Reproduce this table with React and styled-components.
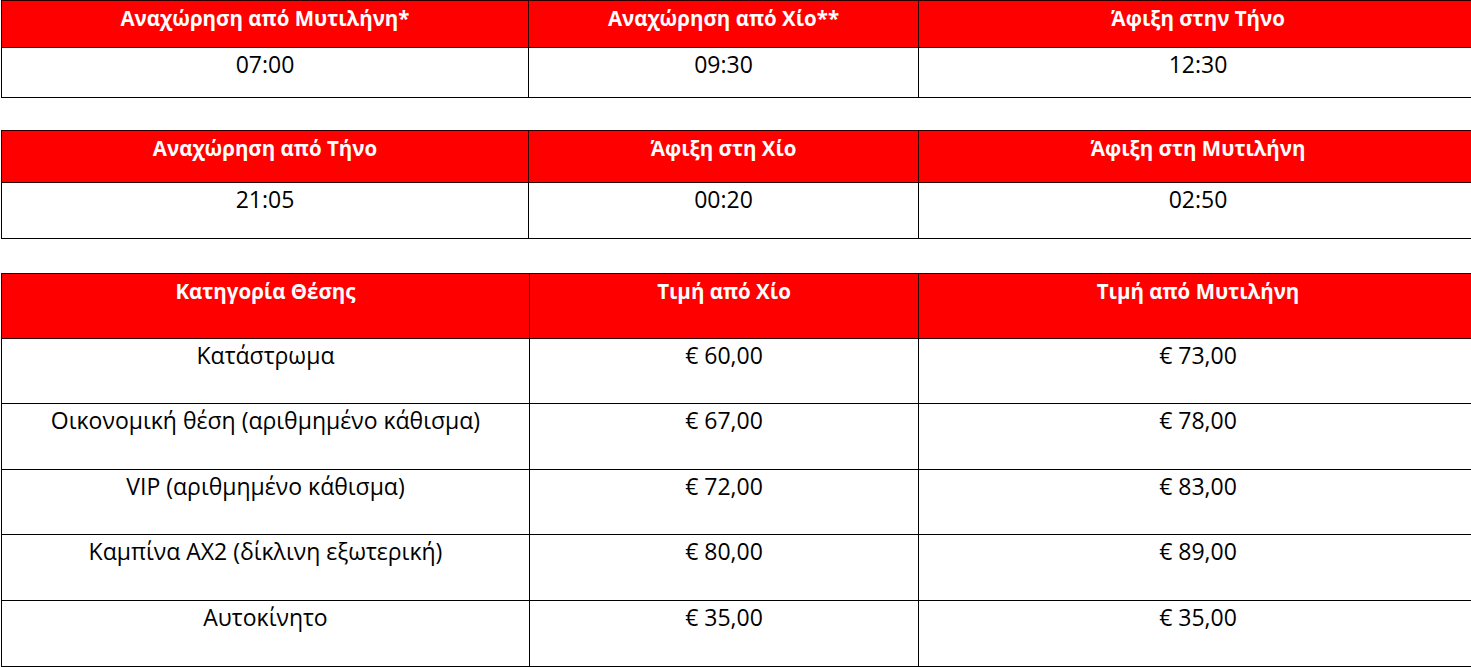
import React from 'react';
import styled, { createGlobalStyle } from 'styled-components';

const GlobalStyle = createGlobalStyle`
  html, body {
    margin: 0;
    padding: 0;
    background: #ffffff;
    overflow: hidden;
  }
  body {
    font-family: 'Open Sans', 'Noto Sans', 'Liberation Sans', sans-serif;
  }
`;

const Page = styled.div`
  display: flex;
  flex-direction: column;
  padding-left: 1px;
  width: 1476px;
`;

const Schedule = styled.table`
  border-collapse: collapse;
  table-layout: fixed;
  width: 1476px;
  margin-top: ${({ gap }) => gap}px;
`;

const HeadRow = styled.tr`
  height: ${({ height }) => height}px;
  background: #ff0000;
`;

const BodyRow = styled.tr`
  height: ${({ height }) => height}px;
`;

const HeadCell = styled.th`
  border: 1px solid #2a0000;
  color: #ffffff;
  font-size: 20.5px;
  font-weight: 700;
  line-height: 30px;
  padding: 2px 6px 0;
  text-align: center;
  vertical-align: top;
  white-space: nowrap;
`;

const Cell = styled.td`
  border: 1px solid #000000;
  color: #000000;
  font-size: 23px;
  font-weight: 400;
  line-height: 30px;
  padding: 1px 6px 0;
  text-align: center;
  vertical-align: top;
  white-space: nowrap;
`;

const Columns = ({ widths }) => (
  <colgroup>
    {widths.map((w, i) => (
      <col key={i} style={{ width: w }} />
    ))}
  </colgroup>
);

const TimeTable = ({ heads, rows, headHeight, rowHeights, widths, gap = 0 }) => (
  <Schedule gap={gap}>
    <Columns widths={widths} />
    <thead>
      <HeadRow height={headHeight}>
        {heads.map((h) => (
          <HeadCell key={h}>{h}</HeadCell>
        ))}
      </HeadRow>
    </thead>
    <tbody>
      {rows.map((r, i) => (
        <BodyRow key={i} height={rowHeights[i]}>
          {r.map((c, j) => (
            <Cell key={j}>{c}</Cell>
          ))}
        </BodyRow>
      ))}
    </tbody>
  </Schedule>
);

const outbound = {
  heads: ['Αναχώρηση από Μυτιλήνη*', 'Αναχώρηση από Χίο**', 'Άφιξη στην Τήνο'],
  rows: [['07:00', '09:30', '12:30']],
};

const inbound = {
  heads: ['Αναχώρηση από Τήνο', 'Άφιξη στη Χίο', 'Άφιξη στη Μυτιλήνη'],
  rows: [['21:05', '00:20', '02:50']],
};

const prices = {
  heads: ['Κατηγορία Θέσης', 'Τιμή από Χίο', 'Τιμή από Μυτιλήνη'],
  rows: [
    ['Κατάστρωμα', '€ 60,00', '€ 73,00'],
    ['Οικονομική θέση (αριθμημένο κάθισμα)', '€ 67,00', '€ 78,00'],
    ['VIP (αριθμημένο κάθισμα)', '€ 72,00', '€ 83,00'],
    ['Καμπίνα ΑΧ2 (δίκλινη εξωτερική)', '€ 80,00', '€ 89,00'],
    ['Αυτοκίνητο', '€ 35,00', '€ 35,00'],
  ],
};

const App = () => (
  <>
    <GlobalStyle />
    <Page>
      <TimeTable
        {...outbound}
        widths={[527, 390, 559]}
        headHeight={47}
        rowHeights={[50]}
      />
      <TimeTable
        {...inbound}
        widths={[527, 390, 559]}
        headHeight={52}
        rowHeights={[56]}
        gap={32}
      />
      <TimeTable
        {...prices}
        widths={[528, 389, 559]}
        headHeight={65}
        rowHeights={[65, 66, 65, 66, 66]}
        gap={34}
      />
    </Page>
  </>
);

export default App;
